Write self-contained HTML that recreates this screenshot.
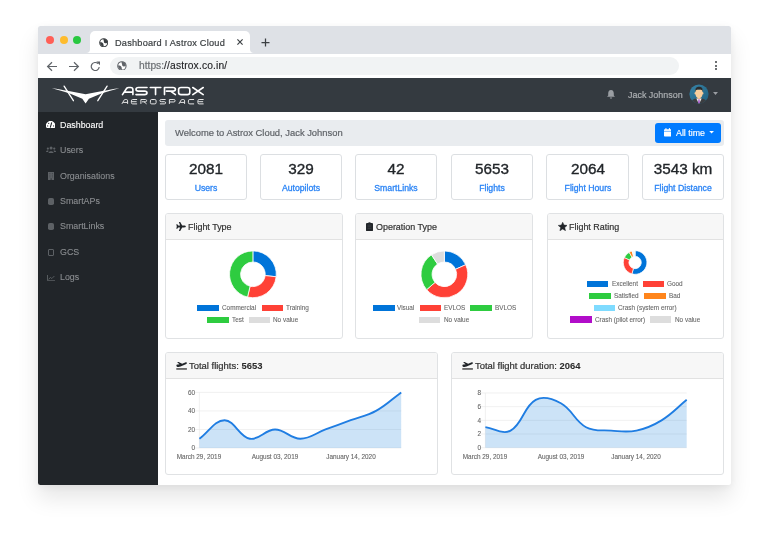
<!DOCTYPE html>
<html><head><meta charset="utf-8"><style>
html,body{margin:0;padding:0;background:#fff;width:768px;height:535px;overflow:hidden;}
body{position:relative;font-family:"Liberation Sans", sans-serif;}
.t{position:absolute;white-space:nowrap;will-change:transform;-webkit-text-stroke:0.2px currentColor;}
.b{position:absolute;}
</style></head><body>
<div class="b" style="left:37.5px;top:25.8px;width:693.10px;height:458.90px;border-radius:2.5px;box-shadow:0 13px 22px rgba(0,0,0,0.10),0 2px 7px rgba(0,0,0,0.05);background:#fff;"></div>
<div class="b" style="left:37.5px;top:25.8px;width:693.10px;height:27.80px;border-radius:2.5px 2.5px 0 0;background:#dee1e6;"></div>
<div class="b" style="left:45.90px;top:35.90px;width:8.6px;height:8.6px;border-radius:50%;background:#ff5f57"></div>
<div class="b" style="left:59.60px;top:35.90px;width:8.6px;height:8.6px;border-radius:50%;background:#febc2e"></div>
<div class="b" style="left:72.80px;top:35.90px;width:8.6px;height:8.6px;border-radius:50%;background:#28c840"></div>
<div class="b" style="left:84px;top:48px;width:172.00px;height:5.40px;background:#fff;"></div>
<div class="b" style="left:80px;top:44px;width:10.00px;height:9.40px;background:#dee1e6;border-radius:0 0 4px 0;"></div>
<div class="b" style="left:250.4px;top:44px;width:11.60px;height:9.40px;background:#dee1e6;border-radius:0 0 0 4px;"></div>
<div class="b" style="left:90px;top:31px;width:160.40px;height:22.40px;background:#fff;border-radius:5px 5px 0 0;"></div>
<svg class="b" style="left:98.6px;top:37.9px" width="9.4" height="9.4" viewBox="0 0 20 20"><circle cx="10" cy="10" r="9.6" fill="#3c4043"/><circle cx="10" cy="10" r="7.4" fill="#fff"/><path d="M9.6,1.8 C13.5,1.4 17.6,4.2 18,8.4 C18,10.6 16.2,11.4 13.8,11.2 C11.4,11 10.2,9.6 10.4,7.4 C10.6,5.4 8.8,4.2 9.6,1.8 Z" fill="#3c4043"/><path d="M2,9.4 C4.8,8.8 7.6,9.8 8.9,11.8 C10,13.6 9.4,15.8 10.6,18.2 C6,18.4 2.2,15 2,9.4 Z" fill="#3c4043"/></svg>
<div class="t" style="left:115px;top:37.72px;font-size:9.2px;line-height:10.58px;color:#3c4043;font-weight:400;letter-spacing:0.22px;">Dashboard I Astrox Cloud</div>
<svg class="b" style="left:236.5px;top:39.4px" width="6" height="6" viewBox="0 0 6 6"><path d="M0.4,0.4 L5.6,5.6 M5.6,0.4 L0.4,5.6" stroke="#3c4043" stroke-width="1.15"/></svg>
<svg class="b" style="left:260.5px;top:37.7px" width="9" height="9" viewBox="0 0 9 9"><path d="M4.5,0.5 L4.5,8.5 M0.5,4.5 L8.5,4.5" stroke="#3c4043" stroke-width="1.25"/></svg>
<div class="b" style="left:37.5px;top:53.6px;width:693.10px;height:24.40px;background:#fff;"></div>
<svg class="b" style="left:46px;top:60.5px" width="12" height="11" viewBox="0 0 12 11"><path d="M11,5.5 L1.8,5.5 M6,1.2 L1.6,5.5 L6,9.8" stroke="#5f6368" stroke-width="1.2" fill="none"/></svg>
<svg class="b" style="left:68px;top:60.5px" width="12" height="11" viewBox="0 0 12 11"><path d="M1,5.5 L10.2,5.5 M6,1.2 L10.4,5.5 L6,9.8" stroke="#5f6368" stroke-width="1.2" fill="none"/></svg>
<svg class="b" style="left:89.5px;top:60.5px" width="11" height="11" viewBox="0 0 11 11"><path d="M9.2,6 A4,4 0 1 1 8,2.6" stroke="#5f6368" stroke-width="1.2" fill="none"/><path d="M6.3,0.6 L10,0.6 L10,4.3 Z" fill="#5f6368"/></svg>
<div class="b" style="left:110.2px;top:56.7px;width:569.30px;height:18.50px;background:#f1f3f4;border-radius:9.5px;"></div>
<svg class="b" style="left:116.89999999999999px;top:60.699999999999996px" width="9.8" height="9.8" viewBox="0 0 20 20"><circle cx="10" cy="10" r="9.6" fill="#5f6368"/><circle cx="10" cy="10" r="7.4" fill="#fff"/><path d="M9.6,1.8 C13.5,1.4 17.6,4.2 18,8.4 C18,10.6 16.2,11.4 13.8,11.2 C11.4,11 10.2,9.6 10.4,7.4 C10.6,5.4 8.8,4.2 9.6,1.8 Z" fill="#5f6368"/><path d="M2,9.4 C4.8,8.8 7.6,9.8 8.9,11.8 C10,13.6 9.4,15.8 10.6,18.2 C6,18.4 2.2,15 2,9.4 Z" fill="#5f6368"/></svg>
<div class="t" style="left:138.9px;top:59.75px;font-size:10.26px;line-height:11.80px;color:#202124;font-weight:400;"><span style="color:#6b6f73">https:</span><span style="color:#202124;-webkit-text-stroke:0.12px #202124;letter-spacing:0.15px">//astrox.co.in/</span></div>
<div class="b" style="left:715px;top:61.20px;width:2.1px;height:2.1px;border-radius:50%;background:#3c4043"></div>
<div class="b" style="left:715px;top:64.60px;width:2.1px;height:2.1px;border-radius:50%;background:#3c4043"></div>
<div class="b" style="left:715px;top:68.20px;width:2.1px;height:2.1px;border-radius:50%;background:#3c4043"></div>
<div class="b" style="left:37.5px;top:78px;width:693.10px;height:33.50px;background:#343a40;"></div>
<svg class="b" style="left:0;top:0" width="768" height="120" viewBox="0 0 768 120"><path d="M51.8,88.3 C58,89.1 63,90.0 67.5,90.8 L85.6,94.3 L103.7,90.8 C108.2,90.0 113.2,89.1 119.4,88.3 C113.2,89.9 107.2,91.6 102.2,93.2 L99,94.6 L88.9,98.8 L85.6,103.5 L82.3,98.8 L72.2,94.6 L69,93.2 C64,91.6 58,89.9 51.8,88.3 Z" fill="#fff"/><path d="M64.1,86.1 L73.4,100.7 M107.1,86.1 L97.8,100.7" stroke="#fff" stroke-width="1.3" stroke-linecap="round"/><path d="M122.50,94.60 L126.87,88.07 Q127.39,87.50 128.53,87.50 L130.61,87.50 Q132.90,87.50 132.90,89.63 L132.90,94.60 M124.79,92.19 L132.90,92.19 M147.00,87.50 L138.42,87.50 Q136.00,87.50 136.00,89.28 Q136.00,91.05 138.42,91.05 L144.58,91.05 Q147.00,91.05 147.00,92.83 Q147.00,94.60 144.58,94.60 L136.00,94.60 M150.30,87.50 L160.80,87.50 M155.55,87.50 L155.55,94.60 M164.50,94.60 L164.50,87.50 L173.00,87.50 Q175.40,87.50 175.40,89.35 Q175.40,91.19 173.00,91.19 L166.46,91.19 M170.50,91.19 L175.40,94.60 M181.06,87.50 L187.34,87.50 Q189.80,87.50 189.80,89.63 L189.80,92.47 Q189.80,94.60 187.34,94.60 L181.06,94.60 Q178.60,94.60 178.60,92.47 L178.60,89.63 Q178.60,87.50 181.06,87.50 Z M192.80,87.50 L203.20,94.60 M203.20,87.50 L192.80,94.60 " fill="none" stroke="#fff" stroke-width="1.65" stroke-linecap="round" stroke-linejoin="round"/><path d="M121.90,103.90 L124.29,99.85 Q124.58,99.50 125.21,99.50 L126.35,99.50 Q127.60,99.50 127.60,100.82 L127.60,103.90 M123.15,102.40 L127.60,102.40 M137.10,99.50 L132.65,99.50 Q131.40,99.50 131.40,100.82 L131.40,102.58 Q131.40,103.90 132.65,103.90 L137.10,103.90 M131.69,101.70 L136.64,101.70 M140.90,103.90 L140.90,99.50 L145.35,99.50 Q146.60,99.50 146.60,100.64 Q146.60,101.79 145.35,101.79 L141.93,101.79 M144.03,101.79 L146.60,103.90 M151.65,99.50 L154.85,99.50 Q156.10,99.50 156.10,100.82 L156.10,102.58 Q156.10,103.90 154.85,103.90 L151.65,103.90 Q150.40,103.90 150.40,102.58 L150.40,100.82 Q150.40,99.50 151.65,99.50 Z M165.60,99.50 L161.15,99.50 Q159.90,99.50 159.90,100.60 Q159.90,101.70 161.15,101.70 L164.35,101.70 Q165.60,101.70 165.60,102.80 Q165.60,103.90 164.35,103.90 L159.90,103.90 M169.40,103.90 L169.40,99.50 L173.85,99.50 Q175.10,99.50 175.10,100.73 Q175.10,101.96 173.85,101.96 L169.40,101.96 M178.90,103.90 L181.29,99.85 Q181.58,99.50 182.21,99.50 L183.35,99.50 Q184.60,99.50 184.60,100.82 L184.60,103.90 M180.15,102.40 L184.60,102.40 M194.10,99.50 L189.83,99.50 Q188.40,99.50 188.40,100.82 L188.40,102.58 Q188.40,103.90 189.83,103.90 L194.10,103.90 M203.60,99.50 L199.15,99.50 Q197.90,99.50 197.90,100.82 L197.90,102.58 Q197.90,103.90 199.15,103.90 L203.60,103.90 M198.19,101.70 L203.14,101.70 " fill="none" stroke="#e6e6e6" stroke-width="1.0" stroke-linecap="butt" stroke-linejoin="round"/></svg>
<svg class="b" style="left:606px;top:88.5px" width="10" height="10" viewBox="0 0 10 10"><path d="M5,1 C7,1 7.8,2.8 7.8,4.5 L7.8,6.5 L9,7.8 L1,7.8 L2.2,6.5 L2.2,4.5 C2.2,2.8 3,1 5,1Z M3.8,8.4 L6.2,8.4 C6.2,9.2 5.6,9.6 5,9.6 C4.4,9.6 3.8,9.2 3.8,8.4Z" fill="#9a9ea3"/></svg>
<div class="t" style="left:627.5px;top:89.55px;font-size:8.95px;line-height:10.29px;color:#abaeb1;font-weight:400;">Jack Johnson</div>
<svg class="b" style="left:688.5px;top:83.8px" width="20" height="20" viewBox="0 0 20 20"><defs><clipPath id="avc"><circle cx="10" cy="10" r="9.6"/></clipPath><linearGradient id="avg" x1="0" y1="0" x2="1" y2="1"><stop offset="0" stop-color="#3784a8"/><stop offset="1" stop-color="#1f5f7e"/></linearGradient></defs><circle cx="10" cy="10" r="9.6" fill="url(#avg)"/><g clip-path="url(#avc)"><path d="M1.5,20 C2,16.6 4,15.2 7.2,14.6 L12.8,14.6 C16,15.2 18,16.6 18.5,20Z" fill="#3b3d40"/><path d="M7.3,14.4 L12.7,14.4 L10,20Z" fill="#f2f2f2"/><path d="M9.45,15.2 L10.55,15.2 L10.9,19 L10,20 L9.1,19Z" fill="#a050c4"/><rect x="8.5" y="11.5" width="3" height="3.4" fill="#efbd8a"/><ellipse cx="6.4" cy="9.2" rx="0.8" ry="1.2" fill="#f6c995"/><ellipse cx="13.6" cy="9.2" rx="0.8" ry="1.2" fill="#f6c995"/><path d="M6.6,5.5 L13.4,5.5 L13.4,10.6 C13.4,12.9 11.8,14.2 10,14.2 C8.2,14.2 6.6,12.9 6.6,10.6 Z" fill="#f9cf9d"/><path d="M6.3,7.6 C6,3.8 8,2.8 10,2.8 C12.2,2.8 14,3.8 13.7,7.6 C13.2,6 12.4,5.5 10,5.5 C7.6,5.5 6.8,6 6.3,7.6 Z" fill="#2c2c2c"/></g></svg>
<svg class="b" style="left:712.8px;top:91.9px" width="5" height="2.9" viewBox="0 0 5 3"><path d="M0,0 L5,0 L2.5,3Z" fill="#9a9ea3"/></svg>
<div class="b" style="left:37.5px;top:111.5px;width:120.50px;height:373.20px;background:#212529;border-radius:0 0 0 2.5px;"></div>
<div class="t" style="left:60px;top:119.74px;font-size:8.85px;line-height:10.18px;color:#fff;font-weight:400;-webkit-text-stroke:0.1px #fff;">Dashboard</div>
<div class="t" style="left:60px;top:145.14px;font-size:8.85px;line-height:10.18px;color:#8b8e91;font-weight:400;-webkit-text-stroke:0.1px #8b8e91;">Users</div>
<div class="t" style="left:60px;top:170.54px;font-size:8.85px;line-height:10.18px;color:#8b8e91;font-weight:400;-webkit-text-stroke:0.1px #8b8e91;">Organisations</div>
<div class="t" style="left:60px;top:195.94px;font-size:8.85px;line-height:10.18px;color:#8b8e91;font-weight:400;-webkit-text-stroke:0.1px #8b8e91;">SmartAPs</div>
<div class="t" style="left:60px;top:221.34px;font-size:8.85px;line-height:10.18px;color:#8b8e91;font-weight:400;-webkit-text-stroke:0.1px #8b8e91;">SmartLinks</div>
<div class="t" style="left:60px;top:246.74px;font-size:8.85px;line-height:10.18px;color:#8b8e91;font-weight:400;-webkit-text-stroke:0.1px #8b8e91;">GCS</div>
<div class="t" style="left:60px;top:272.14px;font-size:8.85px;line-height:10.18px;color:#8b8e91;font-weight:400;-webkit-text-stroke:0.1px #8b8e91;">Logs</div>
<svg class="b" style="left:45.9px;top:120.6px" width="9.3" height="7.6" viewBox="0 0 9.3 7.6"><path d="M0.98,7.5 A4.65,4.65 0 1 1 8.32,7.5 Z" fill="#fff"/><path d="M4.4,6.2 L5.6,1.8" stroke="#212529" stroke-width="1.1" stroke-linecap="round"/><circle cx="1.7" cy="4.9" r="0.55" fill="#212529"/><circle cx="2.7" cy="2.4" r="0.55" fill="#212529"/><circle cx="7.6" cy="4.9" r="0.55" fill="#212529"/></svg>
<svg class="b" style="left:46px;top:146.3px" width="10.1" height="7" viewBox="0 0 10 7"><circle cx="5" cy="2" r="1.5" fill="#5d6165"/><circle cx="1.8" cy="2.6" r="1.1" fill="#5d6165"/><circle cx="8.2" cy="2.6" r="1.1" fill="#5d6165"/><path d="M2.5,7 C2.5,4.5 7.5,4.5 7.5,7Z M0,6 C0,4.5 2,4.2 2.5,4.8 L2,6Z M10,6 C10,4.5 8,4.2 7.5,4.8 L8,6Z" fill="#5d6165"/></svg>
<svg class="b" style="left:47.7px;top:171.8px" width="6.3" height="8.1" viewBox="0 0 6.3 8.1"><rect x="0" y="0" width="6.3" height="8.1" fill="#5d6165"/><path d="M1.4,1.5 h1 M3.9,1.5 h1 M1.4,3.2 h1 M3.9,3.2 h1 M1.4,4.9 h1 M3.9,4.9 h1" stroke="#3f4347" stroke-width="0.8"/><rect x="2.4" y="6.3" width="1.5" height="1.8" fill="#3f4347"/></svg>
<div class="b" style="left:47.5px;top:198px;width:6.8px;height:7.1px;background:#5d6165;border-radius:1.8px"></div>
<div class="b" style="left:47.5px;top:223.4px;width:6.8px;height:7.1px;background:#5d6165;border-radius:1.8px"></div>
<div class="b" style="left:47.5px;top:248.6px;width:6.7px;height:7.1px;border:1.1px solid #5d6165;border-radius:1px;box-sizing:border-box"></div>
<svg class="b" style="left:47px;top:274.8px" width="8" height="6.2" viewBox="0 0 8 6.2"><path d="M0.5,0 L0.5,5.7 L8,5.7" stroke="#5d6165" stroke-width="0.9" fill="none"/><path d="M1.6,4.4 L3.4,2.4 L4.8,3.6 L7.4,1" stroke="#5d6165" stroke-width="0.9" fill="none"/></svg>
<div class="b" style="left:165px;top:120px;width:559.00px;height:26.00px;background:#e9ecef;border-radius:3px;"></div>
<div class="t" style="left:175.3px;top:128.14px;font-size:9.4px;line-height:10.81px;color:#5f6368;font-weight:400;">Welcome to Astrox Cloud, Jack Johnson</div>
<div class="b" style="left:655.1px;top:122.5px;width:66.20px;height:20.10px;background:#007bff;border-radius:3px;"></div>
<svg class="b" style="left:663.6px;top:128.2px" width="7.4" height="8.6" viewBox="0 0 8 9"><rect x="0" y="1.2" width="8" height="7.8" rx="0.8" fill="#fff"/><rect x="1.5" y="0" width="1.2" height="2" fill="#fff"/><rect x="5.3" y="0" width="1.2" height="2" fill="#fff"/><rect x="0" y="3" width="8" height="0.6" fill="#007bff"/></svg>
<div class="t" style="left:675.5px;top:127.95px;font-size:8.84px;line-height:10.17px;color:#fff;font-weight:400;-webkit-text-stroke:0.15px #fff;">All time</div>
<svg class="b" style="left:709.2px;top:131.2px" width="5.2" height="2.8" viewBox="0 0 5 3"><path d="M0,0 L5,0 L2.5,2.8Z" fill="#fff"/></svg>
<div class="b" style="left:164.8px;top:154.2px;width:81.90px;height:45.50px;border:1px solid #dcdfe2;border-radius:3px;box-sizing:border-box;background:#fff;"></div>
<div class="t" style="left:55.75px;width:300px;text-align:center;top:159.90px;font-size:15.3px;line-height:17.59px;color:#212529;font-weight:400;-webkit-text-stroke:0.35px #212529;">2081</div>
<div class="t" style="left:55.75px;width:300px;text-align:center;top:183.38px;font-size:8.7px;line-height:10.00px;color:#2b84f5;font-weight:400;-webkit-text-stroke:0.3px #2b84f5;">Users</div>
<div class="b" style="left:259.8px;top:154.2px;width:82.20px;height:45.50px;border:1px solid #dcdfe2;border-radius:3px;box-sizing:border-box;background:#fff;"></div>
<div class="t" style="left:150.89999999999998px;width:300px;text-align:center;top:159.90px;font-size:15.3px;line-height:17.59px;color:#212529;font-weight:400;-webkit-text-stroke:0.35px #212529;">329</div>
<div class="t" style="left:150.89999999999998px;width:300px;text-align:center;top:183.38px;font-size:8.7px;line-height:10.00px;color:#2b84f5;font-weight:400;-webkit-text-stroke:0.3px #2b84f5;">Autopilots</div>
<div class="b" style="left:355.4px;top:154.2px;width:82.00px;height:45.50px;border:1px solid #dcdfe2;border-radius:3px;box-sizing:border-box;background:#fff;"></div>
<div class="t" style="left:246.39999999999998px;width:300px;text-align:center;top:159.90px;font-size:15.3px;line-height:17.59px;color:#212529;font-weight:400;-webkit-text-stroke:0.35px #212529;">42</div>
<div class="t" style="left:246.39999999999998px;width:300px;text-align:center;top:183.38px;font-size:8.7px;line-height:10.00px;color:#2b84f5;font-weight:400;-webkit-text-stroke:0.3px #2b84f5;">SmartLinks</div>
<div class="b" style="left:451px;top:154.2px;width:82.00px;height:45.50px;border:1px solid #dcdfe2;border-radius:3px;box-sizing:border-box;background:#fff;"></div>
<div class="t" style="left:342.0px;width:300px;text-align:center;top:159.90px;font-size:15.3px;line-height:17.59px;color:#212529;font-weight:400;-webkit-text-stroke:0.35px #212529;">5653</div>
<div class="t" style="left:342.0px;width:300px;text-align:center;top:183.38px;font-size:8.7px;line-height:10.00px;color:#2b84f5;font-weight:400;-webkit-text-stroke:0.3px #2b84f5;">Flights</div>
<div class="b" style="left:546.3px;top:154.2px;width:82.40px;height:45.50px;border:1px solid #dcdfe2;border-radius:3px;box-sizing:border-box;background:#fff;"></div>
<div class="t" style="left:437.5px;width:300px;text-align:center;top:159.90px;font-size:15.3px;line-height:17.59px;color:#212529;font-weight:400;-webkit-text-stroke:0.35px #212529;">2064</div>
<div class="t" style="left:437.5px;width:300px;text-align:center;top:183.38px;font-size:8.7px;line-height:10.00px;color:#2b84f5;font-weight:400;-webkit-text-stroke:0.3px #2b84f5;">Flight Hours</div>
<div class="b" style="left:641.6px;top:154.2px;width:82.40px;height:45.50px;border:1px solid #dcdfe2;border-radius:3px;box-sizing:border-box;background:#fff;"></div>
<div class="t" style="left:532.8px;width:300px;text-align:center;top:159.90px;font-size:15.3px;line-height:17.59px;color:#212529;font-weight:400;-webkit-text-stroke:0.35px #212529;">3543 km</div>
<div class="t" style="left:532.8px;width:300px;text-align:center;top:183.38px;font-size:8.7px;line-height:10.00px;color:#2b84f5;font-weight:400;-webkit-text-stroke:0.3px #2b84f5;">Flight Distance</div>
<div class="b" style="left:164.7px;top:213.4px;width:178.00px;height:126.00px;border:1px solid #e0e2e4;border-radius:3px;box-sizing:border-box;background:#fff;"></div>
<div class="b" style="left:165.7px;top:214.4px;width:176.00px;height:25.10px;background:#f7f7f7;border-bottom:1px solid #e2e2e2;border-radius:2px 2px 0 0;"></div>
<div class="b" style="left:355.2px;top:213.4px;width:178.00px;height:126.00px;border:1px solid #e0e2e4;border-radius:3px;box-sizing:border-box;background:#fff;"></div>
<div class="b" style="left:356.2px;top:214.4px;width:176.00px;height:25.10px;background:#f7f7f7;border-bottom:1px solid #e2e2e2;border-radius:2px 2px 0 0;"></div>
<div class="b" style="left:546.5px;top:213.4px;width:177.10px;height:126.00px;border:1px solid #e0e2e4;border-radius:3px;box-sizing:border-box;background:#fff;"></div>
<div class="b" style="left:547.5px;top:214.4px;width:175.10px;height:25.10px;background:#f7f7f7;border-bottom:1px solid #e2e2e2;border-radius:2px 2px 0 0;"></div>
<div class="b" style="left:164.5px;top:352.2px;width:273.00px;height:123.00px;border:1px solid #e0e2e4;border-radius:3px;box-sizing:border-box;background:#fff;"></div>
<div class="b" style="left:165.5px;top:353.2px;width:271.00px;height:25.30px;background:#f7f7f7;border-bottom:1px solid #e2e2e2;border-radius:2px 2px 0 0;"></div>
<div class="b" style="left:451.4px;top:352.2px;width:272.20px;height:123.00px;border:1px solid #e0e2e4;border-radius:3px;box-sizing:border-box;background:#fff;"></div>
<div class="b" style="left:452.4px;top:353.2px;width:270.20px;height:25.30px;background:#f7f7f7;border-bottom:1px solid #e2e2e2;border-radius:2px 2px 0 0;"></div>
<svg class="b" style="left:175.5px;top:221.8px" width="10" height="9" viewBox="0 0 10 9"><path d="M9.8,4.5 C9.8,3.8 9,3.6 8.2,3.6 L6.2,3.6 L4.2,0 L2.9,0 L4.1,3.6 L2.2,3.6 L1.3,2.3 L0.3,2.3 L0.8,4.5 L0.3,6.7 L1.3,6.7 L2.2,5.4 L4.1,5.4 L2.9,9 L4.2,9 L6.2,5.4 L8.2,5.4 C9,5.4 9.8,5.2 9.8,4.5 Z" fill="#212529"/></svg>
<div class="t" style="left:187.7px;top:221.55px;font-size:8.95px;line-height:10.29px;color:#333;font-weight:400;-webkit-text-stroke:0.2px #333;">Flight Type</div>
<svg class="b" style="left:366.2px;top:221.8px" width="7" height="9.2" viewBox="0 0 7 9.2"><rect x="0" y="1" width="7" height="8.2" rx="1" fill="#212529"/><path d="M2.2,1.6 L2.2,0.9 Q2.2,0.2 3.5,0.2 Q4.8,0.2 4.8,0.9 L4.8,1.6Z" fill="#212529"/><path d="M1.6,3.2 L5.4,3.2 M1.6,4.8 L5.4,4.8 M1.6,6.4 L5.4,6.4" stroke="#4a4f54" stroke-width="0.5"/></svg>
<div class="t" style="left:375.6px;top:221.55px;font-size:8.95px;line-height:10.29px;color:#333;font-weight:400;-webkit-text-stroke:0.2px #333;">Operation Type</div>
<svg class="b" style="left:557.6px;top:221.9px" width="9.4" height="9" viewBox="0 0 10 9.6"><path d="M5,0.2 L6.4,3.3 L9.8,3.6 L7.2,5.9 L8,9.3 L5,7.5 L2,9.3 L2.8,5.9 L0.2,3.6 L3.6,3.3Z" fill="#212529" stroke="#212529" stroke-width="0.5" stroke-linejoin="round"/></svg>
<div class="t" style="left:569px;top:221.55px;font-size:8.95px;line-height:10.29px;color:#333;font-weight:400;-webkit-text-stroke:0.2px #333;">Flight Rating</div>
<svg class="b" style="left:175.5px;top:360.8px" width="11" height="9" viewBox="0 0 11 9"><rect x="0.3" y="7.2" width="10.6" height="1.5" fill="#4a4a4a"/><path d="M0.4,4.4 C0.4,3.6 1.2,3.4 2,3.6 L3.6,3.3 L1.4,1.6 C1.2,1.3 1.5,0.9 1.9,1.0 L2.6,1.1 L6.2,2.8 L9.2,1.4 C10.2,0.9 11,1.2 10.9,1.9 C10.8,2.6 10.1,3.1 9.2,3.5 L4.6,5.6 C3.6,6.0 2.4,6.1 1.5,5.9 C0.9,5.7 0.4,5.1 0.4,4.4 Z" fill="#212529"/></svg>
<div class="t" style="left:188.8px;top:360.69px;font-size:9.45px;line-height:10.87px;color:#333;font-weight:400;-webkit-text-stroke:0.22px #333;">Total flights: <b style="color:#2a2a2a;-webkit-text-stroke:0.05px #333">5653</b></div>
<svg class="b" style="left:461.8px;top:360.8px" width="11" height="9" viewBox="0 0 11 9"><rect x="0.3" y="7.2" width="10.6" height="1.5" fill="#4a4a4a"/><path d="M0.4,4.4 C0.4,3.6 1.2,3.4 2,3.6 L3.6,3.3 L1.4,1.6 C1.2,1.3 1.5,0.9 1.9,1.0 L2.6,1.1 L6.2,2.8 L9.2,1.4 C10.2,0.9 11,1.2 10.9,1.9 C10.8,2.6 10.1,3.1 9.2,3.5 L4.6,5.6 C3.6,6.0 2.4,6.1 1.5,5.9 C0.9,5.7 0.4,5.1 0.4,4.4 Z" fill="#212529"/></svg>
<div class="t" style="left:475.0px;top:360.69px;font-size:9.45px;line-height:10.87px;color:#333;font-weight:400;-webkit-text-stroke:0.22px #333;">Total flight duration: <b style="color:#2a2a2a;-webkit-text-stroke:0.05px #333">2064</b></div>
<svg class="b" style="left:0;top:0" width="768" height="535"><path d="M252.90,250.90 A23.4,23.4 0 0 1 276.17,276.75 L265.13,275.59 A12.3,12.3 0 0 0 252.90,262.00 Z" fill="#0074D9" stroke="#fff" stroke-width="0.8"/><path d="M276.17,276.75 A23.4,23.4 0 0 1 247.52,297.07 L250.07,286.27 A12.3,12.3 0 0 0 265.13,275.59 Z" fill="#FF4136" stroke="#fff" stroke-width="0.8"/><path d="M247.52,297.07 A23.4,23.4 0 0 1 252.90,250.90 L252.90,262.00 A12.3,12.3 0 0 0 250.07,286.27 Z" fill="#2ECC40" stroke="#fff" stroke-width="0.8"/></svg>
<svg class="b" style="left:0;top:0" width="768" height="535"><path d="M444.35,250.95 A23.4,23.4 0 0 1 465.68,264.72 L455.56,269.29 A12.3,12.3 0 0 0 444.35,262.05 Z" fill="#0074D9" stroke="#fff" stroke-width="0.8"/><path d="M465.68,264.72 A23.4,23.4 0 0 1 426.64,289.64 L435.04,282.39 A12.3,12.3 0 0 0 455.56,269.29 Z" fill="#FF4136" stroke="#fff" stroke-width="0.8"/><path d="M426.64,289.64 A23.4,23.4 0 0 1 431.47,254.81 L437.58,264.08 A12.3,12.3 0 0 0 435.04,282.39 Z" fill="#2ECC40" stroke="#fff" stroke-width="0.8"/><path d="M431.47,254.81 A23.4,23.4 0 0 1 444.35,250.95 L444.35,262.05 A12.3,12.3 0 0 0 437.58,264.08 Z" fill="#DDDDDD" stroke="#fff" stroke-width="0.8"/></svg>
<svg class="b" style="left:0;top:0" width="768" height="535"><path d="M635.10,250.70 A11.8,11.8 0 1 1 631.91,273.86 L633.42,268.47 A6.2,6.2 0 1 0 635.10,256.30 Z" fill="#0074D9" stroke="#fff" stroke-width="0.7"/><path d="M631.91,273.86 A11.8,11.8 0 0 1 624.39,257.55 L629.47,259.90 A6.2,6.2 0 0 0 633.42,268.47 Z" fill="#FF4136" stroke="#fff" stroke-width="0.7"/><path d="M624.39,257.55 A11.8,11.8 0 0 1 629.20,252.28 L632.00,257.13 A6.2,6.2 0 0 0 629.47,259.90 Z" fill="#2ECC40" stroke="#fff" stroke-width="0.7"/><path d="M629.20,252.28 A11.8,11.8 0 0 1 632.15,251.08 L633.55,256.50 A6.2,6.2 0 0 0 632.00,257.13 Z" fill="#FF851B" stroke="#fff" stroke-width="0.7"/><path d="M632.15,251.08 A11.8,11.8 0 0 1 635.10,250.70 L635.10,256.30 A6.2,6.2 0 0 0 633.55,256.50 Z" fill="#eef9fe" stroke="#fff" stroke-width="0.7"/></svg>
<div class="b" style="left:197.2px;top:304.59999999999997px;width:21.70px;height:6.20px;background:#0074D9;"></div><div class="t" style="left:222px;top:303.70px;font-size:6.4px;line-height:7.36px;color:#666;font-weight:400;-webkit-text-stroke:0.08px #666;">Commercial</div><div class="b" style="left:261.6px;top:304.59999999999997px;width:21.40px;height:6.20px;background:#FF4136;"></div><div class="t" style="left:286.4px;top:303.70px;font-size:6.4px;line-height:7.36px;color:#666;font-weight:400;-webkit-text-stroke:0.08px #666;">Training</div>
<div class="b" style="left:207px;top:316.5px;width:21.60px;height:6.20px;background:#2ECC40;"></div><div class="t" style="left:232px;top:315.60px;font-size:6.4px;line-height:7.36px;color:#666;font-weight:400;-webkit-text-stroke:0.08px #666;">Test</div><div class="b" style="left:249px;top:316.5px;width:21.00px;height:6.20px;background:#DDDDDD;"></div><div class="t" style="left:273.4px;top:315.60px;font-size:6.4px;line-height:7.36px;color:#666;font-weight:400;-webkit-text-stroke:0.08px #666;">No value</div>
<div class="b" style="left:373px;top:304.59999999999997px;width:21.50px;height:6.20px;background:#0074D9;"></div><div class="t" style="left:397px;top:303.70px;font-size:6.4px;line-height:7.36px;color:#666;font-weight:400;-webkit-text-stroke:0.08px #666;">Visual</div><div class="b" style="left:420px;top:304.59999999999997px;width:21.00px;height:6.20px;background:#FF4136;"></div><div class="t" style="left:444px;top:303.70px;font-size:6.4px;line-height:7.36px;color:#666;font-weight:400;-webkit-text-stroke:0.08px #666;">EVLOS</div><div class="b" style="left:470.4px;top:304.59999999999997px;width:21.50px;height:6.20px;background:#2ECC40;"></div><div class="t" style="left:494.8px;top:303.70px;font-size:6.4px;line-height:7.36px;color:#666;font-weight:400;-webkit-text-stroke:0.08px #666;">BVLOS</div>
<div class="b" style="left:419.4px;top:316.5px;width:20.90px;height:6.20px;background:#DDDDDD;"></div><div class="t" style="left:443.7px;top:315.60px;font-size:6.4px;line-height:7.36px;color:#666;font-weight:400;-webkit-text-stroke:0.08px #666;">No value</div>
<div class="b" style="left:586.6px;top:280.79999999999995px;width:21.40px;height:6.20px;background:#0074D9;"></div><div class="t" style="left:611.5px;top:279.90px;font-size:6.4px;line-height:7.36px;color:#666;font-weight:400;-webkit-text-stroke:0.08px #666;">Excellent</div><div class="b" style="left:642.6px;top:280.79999999999995px;width:21.20px;height:6.20px;background:#FF4136;"></div><div class="t" style="left:667.2px;top:279.90px;font-size:6.4px;line-height:7.36px;color:#666;font-weight:400;-webkit-text-stroke:0.08px #666;">Good</div>
<div class="b" style="left:589.2px;top:292.7px;width:21.50px;height:6.20px;background:#2ECC40;"></div><div class="t" style="left:614px;top:291.80px;font-size:6.4px;line-height:7.36px;color:#666;font-weight:400;-webkit-text-stroke:0.08px #666;">Satisfied</div><div class="b" style="left:644.2px;top:292.7px;width:21.50px;height:6.20px;background:#FF851B;"></div><div class="t" style="left:668.8px;top:291.80px;font-size:6.4px;line-height:7.36px;color:#666;font-weight:400;-webkit-text-stroke:0.08px #666;">Bad</div>
<div class="b" style="left:593.7px;top:304.7px;width:21.40px;height:6.20px;background:#7FDBFF;"></div><div class="t" style="left:618px;top:303.80px;font-size:6.4px;line-height:7.36px;color:#666;font-weight:400;-webkit-text-stroke:0.08px #666;">Crash (system error)</div>
<div class="b" style="left:570.1px;top:316.4px;width:21.50px;height:6.20px;background:#B10DC9;"></div><div class="t" style="left:594.5px;top:315.50px;font-size:6.4px;line-height:7.36px;color:#666;font-weight:400;-webkit-text-stroke:0.08px #666;">Crash (pilot error)</div><div class="b" style="left:650px;top:316.4px;width:21.40px;height:6.20px;background:#DDDDDD;"></div><div class="t" style="left:674.6px;top:315.50px;font-size:6.4px;line-height:7.36px;color:#666;font-weight:400;-webkit-text-stroke:0.08px #666;">No value</div>
<svg class="b" style="left:0;top:0" width="768" height="535"><line x1="194.9" y1="448.00" x2="401.2" y2="448.00" stroke="#e6e6e6" stroke-width="0.6"/><line x1="194.9" y1="429.47" x2="401.2" y2="429.47" stroke="#e6e6e6" stroke-width="0.6"/><line x1="194.9" y1="410.93" x2="401.2" y2="410.93" stroke="#e6e6e6" stroke-width="0.6"/><line x1="194.9" y1="392.40" x2="401.2" y2="392.40" stroke="#e6e6e6" stroke-width="0.6"/><line x1="199.4" y1="392.4" x2="199.4" y2="448" stroke="#e6e6e6" stroke-width="0.6"/><path d="M199.40,438.73 C209.49,431.32 214.53,420.20 224.62,420.20 C234.72,420.20 238.99,436.74 249.85,438.73 C259.17,440.45 264.99,429.47 275.07,429.47 C285.17,429.47 290.21,438.73 300.30,438.73 C310.39,438.73 315.44,433.17 325.52,429.47 C335.61,425.76 340.66,423.91 350.75,420.20 C360.84,416.49 366.65,416.07 375.98,410.93 C386.83,404.95 391.11,399.81 401.20,392.40 L401.2,448 L199.4,448 Z" fill="rgba(0,116,217,0.2)"/><path d="M199.40,438.73 C209.49,431.32 214.53,420.20 224.62,420.20 C234.72,420.20 238.99,436.74 249.85,438.73 C259.17,440.45 264.99,429.47 275.07,429.47 C285.17,429.47 290.21,438.73 300.30,438.73 C310.39,438.73 315.44,433.17 325.52,429.47 C335.61,425.76 340.66,423.91 350.75,420.20 C360.84,416.49 366.65,416.07 375.98,410.93 C386.83,404.95 391.11,399.81 401.20,392.40" fill="none" stroke="#1f7de2" stroke-width="1.85"/></svg>
<div class="t" style="left:-105.4px;width:300px;text-align:right;top:444.30px;font-size:6.4px;line-height:7.36px;color:#666;font-weight:400;-webkit-text-stroke:0.1px #666;">0</div>
<div class="t" style="left:-105.4px;width:300px;text-align:right;top:425.77px;font-size:6.4px;line-height:7.36px;color:#666;font-weight:400;-webkit-text-stroke:0.1px #666;">20</div>
<div class="t" style="left:-105.4px;width:300px;text-align:right;top:407.24px;font-size:6.4px;line-height:7.36px;color:#666;font-weight:400;-webkit-text-stroke:0.1px #666;">40</div>
<div class="t" style="left:-105.4px;width:300px;text-align:right;top:388.70px;font-size:6.4px;line-height:7.36px;color:#666;font-weight:400;-webkit-text-stroke:0.1px #666;">60</div>
<div class="t" style="left:49.400000000000006px;width:300px;text-align:center;top:453.30px;font-size:6.4px;line-height:7.36px;color:#666;font-weight:400;-webkit-text-stroke:0.1px #666;">March 29, 2019</div>
<div class="t" style="left:125.07499999999999px;width:300px;text-align:center;top:453.30px;font-size:6.4px;line-height:7.36px;color:#666;font-weight:400;-webkit-text-stroke:0.1px #666;">August 03, 2019</div>
<div class="t" style="left:200.75px;width:300px;text-align:center;top:453.30px;font-size:6.4px;line-height:7.36px;color:#666;font-weight:400;-webkit-text-stroke:0.1px #666;">January 14, 2020</div>
<svg class="b" style="left:0;top:0" width="768" height="535"><line x1="480.9" y1="447.70" x2="686.7" y2="447.70" stroke="#e6e6e6" stroke-width="0.6"/><line x1="480.9" y1="434.02" x2="686.7" y2="434.02" stroke="#e6e6e6" stroke-width="0.6"/><line x1="480.9" y1="420.35" x2="686.7" y2="420.35" stroke="#e6e6e6" stroke-width="0.6"/><line x1="480.9" y1="406.68" x2="686.7" y2="406.68" stroke="#e6e6e6" stroke-width="0.6"/><line x1="480.9" y1="393.00" x2="686.7" y2="393.00" stroke="#e6e6e6" stroke-width="0.6"/><line x1="485.4" y1="393" x2="485.4" y2="447.7" stroke="#e6e6e6" stroke-width="0.6"/><path d="M485.40,427.19 C495.46,428.56 502.72,434.87 510.56,430.61 C522.85,423.93 523.44,406.51 535.73,399.84 C543.57,395.57 552.38,398.64 560.89,403.26 C572.51,409.58 574.42,420.87 586.05,427.19 C594.55,431.81 601.10,429.92 611.21,430.61 C621.23,431.29 626.70,432.58 636.38,430.61 C646.83,428.48 652.37,425.96 661.54,420.35 C672.50,413.65 676.63,408.04 686.70,399.84 L686.7,447.7 L485.4,447.7 Z" fill="rgba(0,116,217,0.2)"/><path d="M485.40,427.19 C495.46,428.56 502.72,434.87 510.56,430.61 C522.85,423.93 523.44,406.51 535.73,399.84 C543.57,395.57 552.38,398.64 560.89,403.26 C572.51,409.58 574.42,420.87 586.05,427.19 C594.55,431.81 601.10,429.92 611.21,430.61 C621.23,431.29 626.70,432.58 636.38,430.61 C646.83,428.48 652.37,425.96 661.54,420.35 C672.50,413.65 676.63,408.04 686.70,399.84" fill="none" stroke="#1f7de2" stroke-width="1.85"/></svg>
<div class="t" style="left:180.59999999999997px;width:300px;text-align:right;top:444.00px;font-size:6.4px;line-height:7.36px;color:#666;font-weight:400;-webkit-text-stroke:0.1px #666;">0</div>
<div class="t" style="left:180.59999999999997px;width:300px;text-align:right;top:430.33px;font-size:6.4px;line-height:7.36px;color:#666;font-weight:400;-webkit-text-stroke:0.1px #666;">2</div>
<div class="t" style="left:180.59999999999997px;width:300px;text-align:right;top:416.65px;font-size:6.4px;line-height:7.36px;color:#666;font-weight:400;-webkit-text-stroke:0.1px #666;">4</div>
<div class="t" style="left:180.59999999999997px;width:300px;text-align:right;top:402.98px;font-size:6.4px;line-height:7.36px;color:#666;font-weight:400;-webkit-text-stroke:0.1px #666;">6</div>
<div class="t" style="left:180.59999999999997px;width:300px;text-align:right;top:389.30px;font-size:6.4px;line-height:7.36px;color:#666;font-weight:400;-webkit-text-stroke:0.1px #666;">8</div>
<div class="t" style="left:335.4px;width:300px;text-align:center;top:453.30px;font-size:6.4px;line-height:7.36px;color:#666;font-weight:400;-webkit-text-stroke:0.1px #666;">March 29, 2019</div>
<div class="t" style="left:410.88750000000005px;width:300px;text-align:center;top:453.30px;font-size:6.4px;line-height:7.36px;color:#666;font-weight:400;-webkit-text-stroke:0.1px #666;">August 03, 2019</div>
<div class="t" style="left:486.375px;width:300px;text-align:center;top:453.30px;font-size:6.4px;line-height:7.36px;color:#666;font-weight:400;-webkit-text-stroke:0.1px #666;">January 14, 2020</div>
</body></html>
